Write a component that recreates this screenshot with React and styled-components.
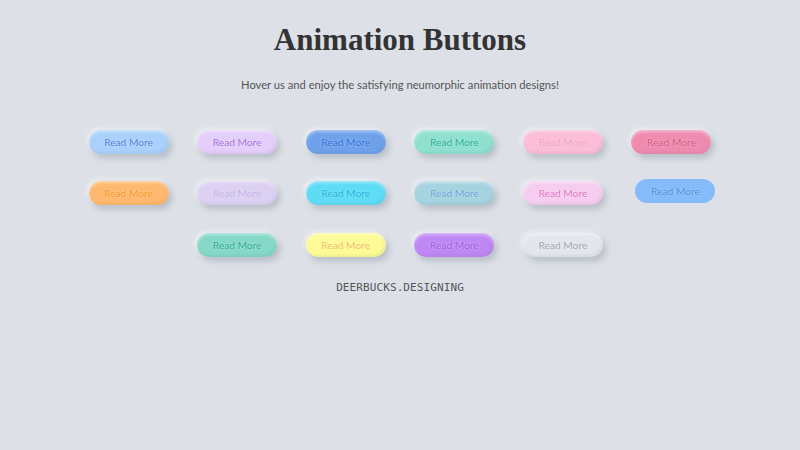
import styled, { createGlobalStyle } from "styled-components";

const GlobalStyle = createGlobalStyle`
  html, body {
    margin: 0;
    padding: 0;
    background: #dde1e7;
  }
  body {
    font-family: Lato, "Open Sans", sans-serif;
  }
`;

const buttons = [
  { bg: "#a9d1fb", fg: "#5f7fd8" },
  { bg: "#e4cefa", fg: "#a874d8" },
  { bg: "#6fa1ea", fg: "#2d70da" },
  { bg: "#8fe0cf", fg: "#27b394" },
  { bg: "#fbbdd7", fg: "#f4a0c3" },
  { bg: "#f08bb0", fg: "#d65a82" },
  { bg: "#ffb86f", fg: "#f39a2a" },
  { bg: "#ddd1f3", fg: "#c2b3e8" },
  { bg: "#5fdcf5", fg: "#1db3df" },
  { bg: "#a5d3df", fg: "#70a6de" },
  { bg: "#f6cdf0", fg: "#df7cc6" },
  { bg: "#85bafb", fg: "#4f8fd9", pressed: true },
  { bg: "#85d8c8", fg: "#2fae93" },
  { bg: "#fcfb96", fg: "#f1c262" },
  { bg: "#bf87f4", fg: "#9b5de5" },
  { bg: "#e3e6ec", fg: "#a3a8b0" },
];

const App = () => {
  return (
    <Page>
      <GlobalStyle />
      <Title>Animation Buttons</Title>
      <Subtitle>Hover us and enjoy the satisfying neumorphic animation designs!</Subtitle>
      <Grid>
        {buttons.map((b, i) => (
          <Slot key={i}>
            <Button $bg={b.bg} $fg={b.fg} $pressed={b.pressed}>
              Read More
            </Button>
          </Slot>
        ))}
      </Grid>
      <Footer>DEERBUCKS.DESIGNING</Footer>
    </Page>
  );
};

export default App;

const Page = styled.div`
  width: 800px;
  height: 450px;
  display: flex;
  flex-direction: column;
  align-items: center;
  background: #dde1e7;
  overflow: hidden;
`;

const Title = styled.h1`
  margin: 21px 0 0;
  font-family: "Liberation Serif", "Times New Roman", serif;
  font-size: 31px;
  font-weight: 700;
  line-height: 38px;
  color: #333;
`;

const Subtitle = styled.p`
  margin: 18px 0 0;
  font-size: 11.2px;
  line-height: 16px;
  color: #555;
`;

const Grid = styled.div`
  width: 652px;
  margin-top: 23px;
  display: flex;
  flex-wrap: wrap;
  justify-content: center;
`;

const Slot = styled.div`
  width: 108.6px;
  height: 51.5px;
  display: flex;
  align-items: center;
  justify-content: center;
`;

const Button = styled.button`
  width: 80px;
  height: 24px;
  border: none;
  border-radius: 12px;
  padding: 0;
  font-family: Lato, sans-serif;
  font-size: 10.2px;
  color: ${({ $fg }) => $fg};
  background: ${({ $bg }) => $bg};
  text-shadow: 0 0 3px rgba(255, 255, 255, 0.5);
  box-shadow: ${({ $pressed }) =>
    $pressed
      ? "0 0 2px rgba(255,255,255,0.3)"
      : "inset 0 2px 3px rgba(255,255,255,0.4), inset -2px -2px 3px rgba(0,0,0,0.05), -2px -2px 5px rgba(255,255,255,0.45), 3px 4px 6px rgba(94,104,121,0.3)"};
  transform: ${({ $pressed }) => ($pressed ? "translate(4px, -2px)" : "none")};
  cursor: pointer;
`;

const Footer = styled.div`
  margin-top: 10px;
  font-family: "DejaVu Sans Mono", monospace;
  font-size: 11px;
  letter-spacing: 0.1px;
  color: #555;
`;
